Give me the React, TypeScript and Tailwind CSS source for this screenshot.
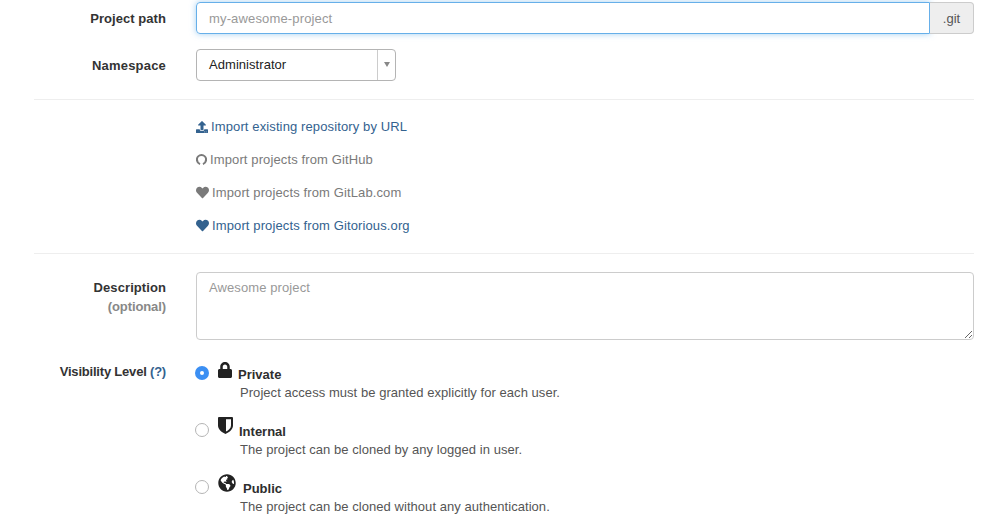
import { FaGlobeAmericas, FaHeart, FaLock, FaUpload } from "react-icons/fa";
import type { ReactNode } from "react";

const GithubRing = () => (
  <svg viewBox="0 0 12 12" className="h-[11px] w-[11px]" fill="none" stroke="currentColor" strokeWidth="2.2">
    <path d="M4.4 11 C2.4 10.2 1 8.3 1 6.1 A5 5 0 0 1 11 6.1 C11 8.3 9.6 10.2 7.6 11" />
  </svg>
);

// half filled shield, wider than the one in the icon packages
const HalfShield = () => (
  <svg viewBox="0 0 15 17" className="mt-[1px] h-[17px] w-[15px]">
    <path
      fillRule="evenodd"
      fill="#222222"
      d="M1 0 H14 A1 1 0 0 1 15 1 V8.5 C15 12.5 11 15.5 7.5 17 C4 15.5 0 12.5 0 8.5 V1 A1 1 0 0 1 1 0 Z M8 2.2 V14.6 C10.6 13.2 13 11.2 13 8.5 V2.2 Z"
    />
  </svg>
);

const LinkRow = ({ icon, text, color }: { icon: ReactNode; text: string; color: string }) => (
  <div className={`flex h-[33px] items-center gap-[3px] tracking-[0.12px] ${color}`}>
    {icon}
    <span>{text}</span>
  </div>
);

const Visibility = ({
  icon,
  name,
  help,
  checked,
  nameMargin,
  height
}: {
  icon: ReactNode;
  name: string;
  help: string;
  checked?: boolean;
  nameMargin: string;
  height: string;
}) => (
  <div className={`flex ${height}`}>
    <div className="-ml-[1px] w-[23px] pt-[7px]">
      {checked ? (
        <div className="flex h-[14px] w-[14px] items-center justify-center rounded-full bg-[#3b8ff3]">
          <div className="h-[4px] w-[4px] rounded-full bg-white" />
        </div>
      ) : (
        <div className="h-[14px] w-[14px] rounded-full border border-[#b5b5b5] bg-white" />
      )}
    </div>
    <div>
      <div className="flex h-[25px] items-end">
        <span className="w-[16px] self-start">{icon}</span>
        <span className={`font-bold leading-[18px] text-[#2e2e2e] ${nameMargin}`}>{name}</span>
      </div>
      <div className="ml-[22px] leading-[18px] tracking-[0.05px] text-[#555555]">{help}</div>
    </div>
  </div>
);

const App = () => {
  return (
    <div className="h-[529px] w-[1008px] overflow-hidden bg-white pl-[34px] pt-[2px] font-['Liberation_Sans',sans-serif] text-[13px] text-[#333333]">
      <div className="w-[940px]">
        {/* Project path */}
        <div className="flex items-center">
          <label className="w-[132px] pt-[1px] text-right font-bold tracking-[0.05px] text-[#333333]">Project path</label>
          <div className="ml-[30px] flex flex-1">
            <input
              readOnly
              placeholder="my-awesome-project"
              className="h-[32px] flex-1 rounded-l-[4px] border border-[#66afe9] px-3 tracking-[0.15px] shadow-[0_0_6px_rgba(102,175,233,0.6)] outline-none placeholder:text-[#999999]"
            />
            <div className="flex h-[32px] w-[44px] items-center justify-center rounded-r-[4px] border border-l-0 border-[#cccccc] bg-[#eeeeee] pt-[1px] text-[#555555]">
              .git
            </div>
          </div>
        </div>

        {/* Namespace */}
        <div className="mt-[15px] flex items-center">
          <label className="w-[132px] pt-[1px] text-right font-bold tracking-[0.2px] text-[#333333]">Namespace</label>
          <div className="ml-[30px] flex h-[32px] w-[200px] items-center rounded-[4px] border border-[#b4b4b4] bg-white">
            <span className="flex-1 pb-[1px] pl-3 tracking-[0.05px] text-[#222222]">Administrator</span>
            <div className="flex h-full w-[18px] items-center justify-center border-l border-[#cccccc]">
              <div className="mb-[1px] h-0 w-0 border-x-[3px] border-t-[5px] border-x-transparent border-t-[#888888]" />
            </div>
          </div>
        </div>

        <hr className="mt-[18px] border-[#eeeeee]" />

        {/* Import links */}
        <div className="ml-[162px] mt-[10px]">
          <LinkRow color="text-[#33628f]" text="Import existing repository by URL" icon={<FaUpload className="h-[12px] w-[12px]" />} />
          <LinkRow color="text-[#7a7a7a]" text="Import projects from GitHub" icon={<GithubRing />} />
          <LinkRow color="text-[#7a7a7a]" text="Import projects from GitLab.com" icon={<FaHeart className="h-[13px] w-[13px]" />} />
          <LinkRow color="text-[#33628f]" text="Import projects from Gitorious.org" icon={<FaHeart className="h-[13px] w-[13px]" />} />
        </div>

        <hr className="mt-[11px] border-[#eeeeee]" />

        {/* Description */}
        <div className="mt-[18px] flex">
          <div className="w-[132px] pt-[6px] text-right font-bold leading-[19px]">
            <div className="tracking-[0.08px]">Description</div>
            <div className="tracking-[-0.1px] text-[#888888]">(optional)</div>
          </div>
          <textarea
            readOnly
            placeholder="Awesome project"
            className="ml-[30px] block h-[68px] flex-1 rounded-[4px] border border-[#cccccc] px-3 py-[6px] leading-[18px] tracking-[0.1px] outline-none placeholder:text-[#999999]"
          />
        </div>

        {/* Visibility */}
        <div className="mt-[14px] flex">
          <div className="w-[132px] pt-[9px] text-right font-bold leading-[18px] tracking-[-0.2px]">
            Visibility Level <span className="text-[#33628f]">(?)</span>
          </div>
          <div className="ml-[30px] pt-[5px]">
            <Visibility
              checked
              height="h-[57px]"
              nameMargin="ml-[4px]"
              name="Private"
              help="Project access must be granted explicitly for each user."
              icon={<FaLock className="mt-[3px] h-[16px] w-[14px] text-[#222222]" />}
            />
            <Visibility
              height="h-[57px]"
              nameMargin="ml-[5px]"
              name="Internal"
              help="The project can be cloned by any logged in user."
              icon={<HalfShield />}
            />
            <Visibility
              height="h-[40px]"
              nameMargin="ml-[9px]"
              name="Public"
              help="The project can be cloned without any authentication."
              icon={<FaGlobeAmericas className="mt-[1px] h-[18px] w-[18px] text-[#222222]" />}
            />
          </div>
        </div>
      </div>
    </div>
  );
};

export default App;
